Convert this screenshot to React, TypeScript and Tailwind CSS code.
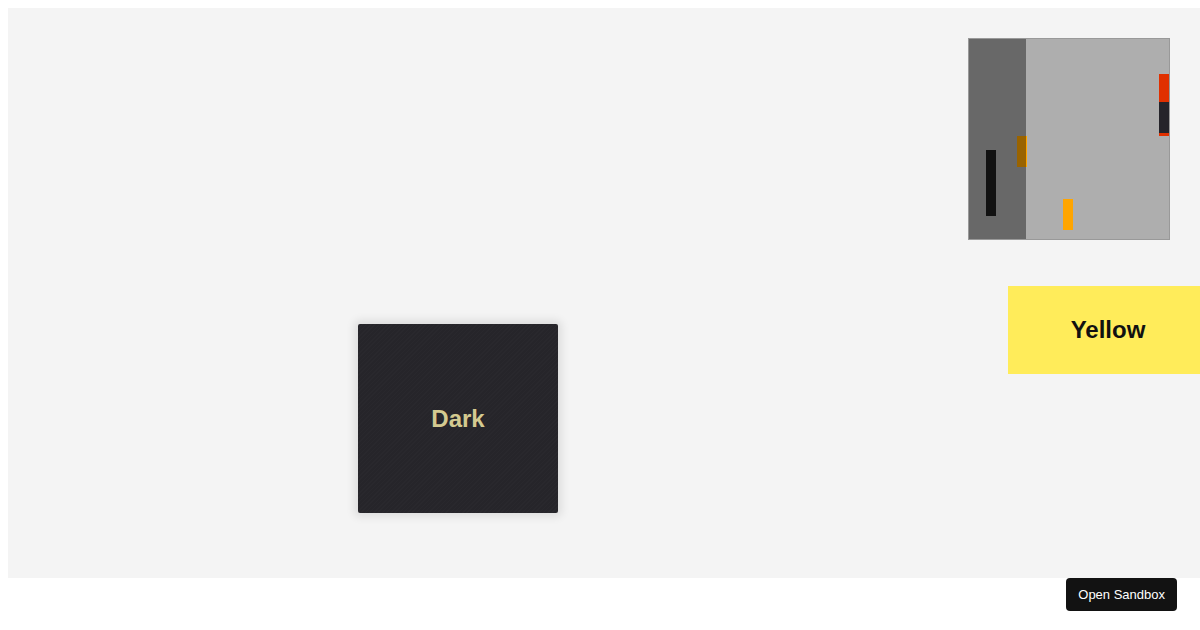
export default function App() {
  return (
    <div className="min-h-screen bg-white pl-2 pt-2 font-['Liberation_Sans',Arial,sans-serif]">
      {/* Canvas */}
      <div className="relative h-[570px] w-[1192px] overflow-hidden bg-[#f4f4f4]">
        {/* Dark node */}
        <div className="absolute left-[350px] top-[316px] flex h-[189px] w-[200px] items-center justify-center rounded-[2px] bg-[#26252a] bg-[repeating-linear-gradient(135deg,#29282d_0px,#29282d_1px,#26252a_1px,#26252a_3px)] shadow-[0_0_8px_4px_rgba(0,0,0,0.09)]">
          <span className="text-[24px] font-bold text-[#d4ca90]">Dark</span>
        </div>

        {/* Yellow node */}
        <div className="absolute left-[1000px] top-[278px] flex h-[88px] w-[200px] items-center justify-center bg-[#ffec5a]">
          <span className="text-[24px] font-bold text-[#111]">Yellow</span>
        </div>

        {/* Minimap */}
        <div className="absolute left-[960px] top-[30px] flex h-[202px] w-[202px] border border-[#999] bg-[#aeaeae]">
          <div className="relative h-full w-full">
            <div className="absolute left-[48px] top-[97px] h-[31px] w-[10px] bg-[#ffa500]" />
            <div className="absolute left-[94px] top-[160px] h-[31px] w-[10px] bg-[#ffa500]" />
            <div className="absolute right-0 top-[35px] h-[62px] w-[10px] bg-[#e03000]" />
            <div className="absolute right-0 top-[63px] h-[31px] w-[10px] bg-[#25242a]" />
            <div className="absolute left-0 top-0 h-full w-[57px] bg-[rgba(0,0,0,0.4)]" />
            <div className="absolute left-[17px] top-[111px] h-[66px] w-[10px] bg-[#121212]" />
          </div>
        </div>
      </div>

      {/* Footer */}
      <div className="flex justify-end pr-[23px]">
        <button className="h-[33px] rounded-[4px] bg-[#121212] px-[12px] text-[13px] text-white">
          Open Sandbox
        </button>
      </div>
    </div>
  )
}
